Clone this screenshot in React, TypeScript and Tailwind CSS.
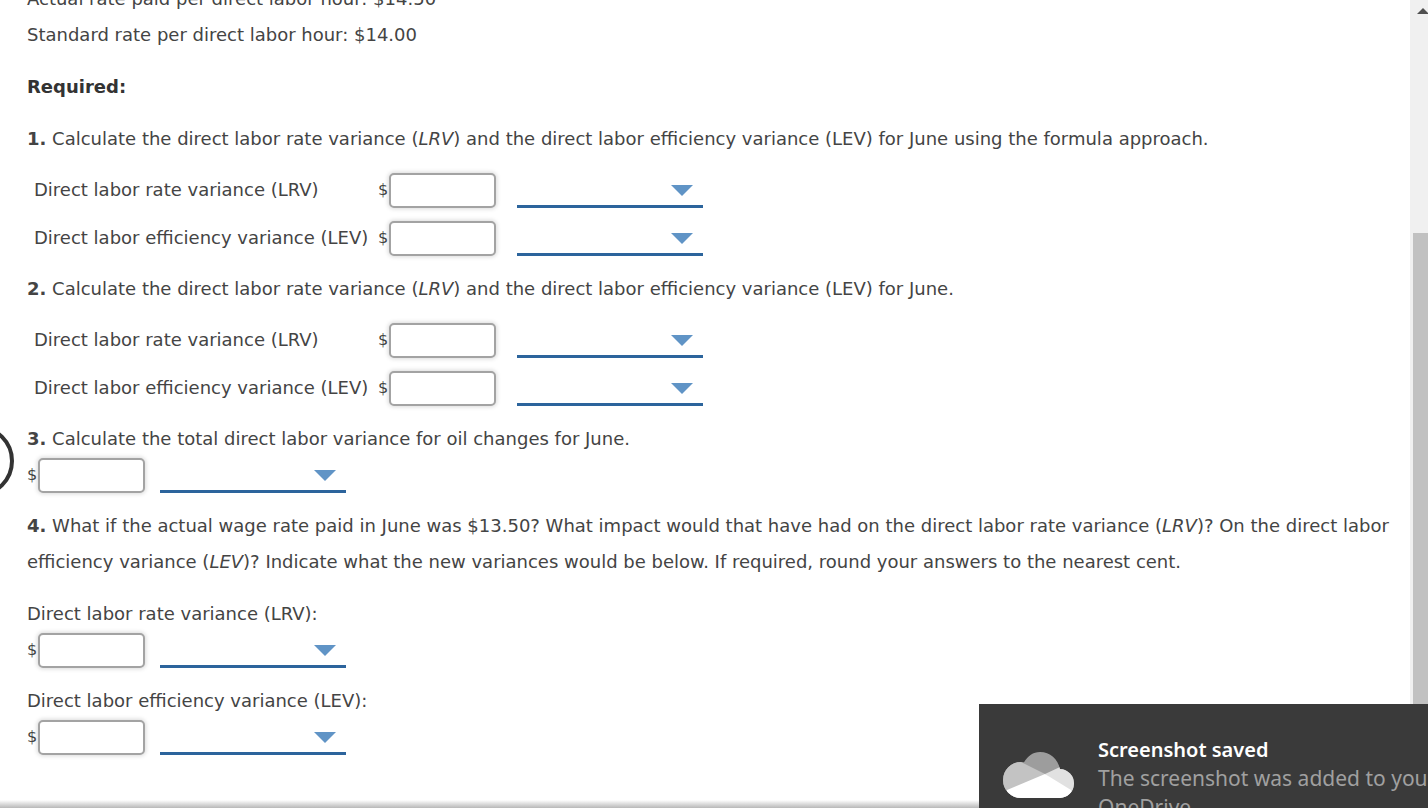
import type { ReactNode } from 'react'

function AmountInput({ id, label }: { id: string; label?: string }) {
  return (
    <div className="flex items-center">
      <span className="w-[11px] text-base">$</span>
      <input
        id={id}
        type="text"
        aria-label={label}
        className="h-[35px] w-[107px] rounded-[5px] border-2 border-[#a3a3a3] bg-white px-2 shadow-[0_0_4px_1px_rgba(0,0,0,0.15)] outline-none"
      />
    </div>
  )
}

function EffectSelect({ label }: { label: string }) {
  return (
    <div className="relative h-[35px] w-[186px]">
      <select
        aria-label={label}
        defaultValue=""
        className="h-full w-full appearance-none border-b-3 border-[#2c649c] bg-transparent pl-2 outline-none"
      >
        <option value=""></option>
        <option>Favorable</option>
        <option>Unfavorable</option>
      </select>
      <svg
        className="pointer-events-none absolute top-3 right-[10px]"
        width="22"
        height="11"
        viewBox="0 0 22 11"
      >
        <path d="M0 0h22L11 11z" fill="#6094c6" />
      </svg>
    </div>
  )
}

function VarianceRow({ id, label }: { id: string; label: string }) {
  return (
    <div className="flex h-12 items-center">
      <label htmlFor={id} className="w-[344px]">{label}</label>
      <AmountInput id={id} />
      <div className="ml-[21px]">
        <EffectSelect label={label + ' effect'} />
      </div>
    </div>
  )
}

function VarianceRows({ prefix }: { prefix: string }) {
  return (
    <div className="my-[9px] pl-[7px]">
      <VarianceRow id={prefix + '-lrv'} label="Direct labor rate variance (LRV)" />
      <VarianceRow id={prefix + '-lev'} label="Direct labor efficiency variance (LEV)" />
    </div>
  )
}

function StackedAnswer({ id, children }: { id: string; children: ReactNode }) {
  return (
    <div className="mb-[15px]">
      <label htmlFor={id} className="block">{children}</label>
      <div className="flex h-9 items-center gap-[15px]">
        <AmountInput id={id} />
        <EffectSelect label="Favorable or unfavorable" />
      </div>
    </div>
  )
}

function Scrollbar() {
  return (
    <div className="flex w-[18px] shrink-0 flex-col bg-[#f0f0f0] pl-[3px]">
      <div className="h-[233px] overflow-hidden pt-2 pl-1">
        <svg width="11" height="6" viewBox="0 0 11 6">
          <path d="M0 6 6 0l6 6z" fill="#505050" />
        </svg>
      </div>
      <div className="grow bg-[#c1c1c1]" />
    </div>
  )
}

function Toast() {
  return (
    <div className="fixed right-0 bottom-0 flex h-26 w-[449px] overflow-hidden bg-[#3a3a3a] pl-6 font-['Noto_Sans',sans-serif] text-[21px] leading-[29px]">
      <svg className="mt-12 shrink-0" width="71" height="46" viewBox="0 0 71 46">
        <defs>
          <clipPath id="cloud">
            <path d="M18 46a18 18 0 0 1 0-36q1.500 0 3 .3C25 4 30 0 37 0c10 0 18 7 20 17a14.500 14.500 0 0 1-1 29z" />
          </clipPath>
        </defs>
        <g clipPath="url(#cloud)">
          <rect width="71" height="46" fill="#9d9d9d" />
          <path d="M0 8 18 10 42 22 71 46H0z" fill="#c3c3c3" />
          <path d="M42 22 57 15 71 17v29z" fill="#e1e1e1" />
          <path d="M4 38 42 22 68 38 71 46H4z" fill="#fff" />
        </g>
      </svg>
      <div className="ml-6 shrink-0 pt-[31px] text-[#a0a0a0]">
        <p className="text-xl leading-[29px] font-semibold text-white">Screenshot saved</p>
        <p>
          The screenshot was added to your
          <br />
          OneDrive.
        </p>
      </div>
    </div>
  )
}

function App() {
  return (
    <div className="relative flex h-screen overflow-hidden bg-white font-['DejaVu_Sans',sans-serif] text-lg leading-9 text-[#444]">
      <main className="-mt-[19px] min-w-0 grow pr-5 pl-[27px]">
        <p>Actual rate paid per direct labor hour: $14.50</p>
        <p className="mb-4">Standard rate per direct labor hour: $14.00</p>
        <p className="mb-4 font-bold text-[#333]">Required:</p>

        <p>
          <b>1.</b> Calculate the direct labor rate variance (<i>LRV</i>) and the direct labor
          efficiency variance (LEV) for June using the formula approach.
        </p>
        <VarianceRows prefix="formula" />

        <p>
          <b>2.</b> Calculate the direct labor rate variance (<i>LRV</i>) and the direct labor
          efficiency variance (LEV) for June.
        </p>
        <VarianceRows prefix="june" />

        <StackedAnswer id="total">
          <b>3.</b> Calculate the total direct labor variance for oil changes for June.
        </StackedAnswer>

        <p className="mb-4">
          <b>4.</b> What if the actual wage rate paid in June was $13.50? What impact would that
          have had on the direct labor rate variance (<i>LRV</i>)? On the direct labor efficiency
          variance (<i>LEV</i>)? Indicate what the new variances would be below. If required, round
          your answers to the nearest cent.
        </p>
        <StackedAnswer id="new-lrv">Direct labor rate variance (LRV):</StackedAnswer>
        <StackedAnswer id="new-lev">Direct labor efficiency variance (LEV):</StackedAnswer>
      </main>
      <Scrollbar />

      <button aria-label="Previous" className="absolute top-[421px] left-0">
        <svg width="15" height="80" viewBox="0 0 15 80">
          <circle cx="-22" cy="40" r="34" fill="none" stroke="#333" strokeWidth="4" />
        </svg>
      </button>
      <div className="absolute inset-x-0 bottom-0 h-2 bg-linear-to-b from-transparent to-[#b8b8b8]" />
      <Toast />
    </div>
  )
}

export default App
